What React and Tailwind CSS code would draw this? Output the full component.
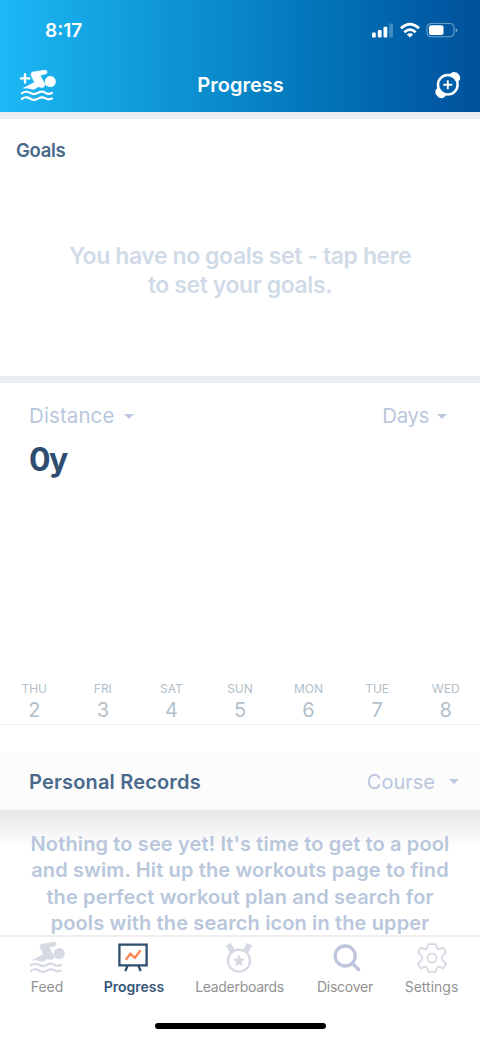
const days = [
  { name: 'THU', date: 2 },
  { name: 'FRI', date: 3 },
  { name: 'SAT', date: 4 },
  { name: 'SUN', date: 5 },
  { name: 'MON', date: 6 },
  { name: 'TUE', date: 7 },
  { name: 'WED', date: 8 },
]

function Swimmer({ plus = false, className }) {
  return (
    <svg viewBox="0 0 37 33" className={['w-[37px] h-[33px]', className].join(' ')} fill="currentColor">
      {plus && <path d="M5 5.2v8.4M.8 9.4h8.6" stroke="currentColor" strokeWidth="2.4" strokeLinecap="round" />}
      <path
        d="M12.4 3.2 25.4 1.2Q26.7 1.3 27 2.8T25.8 4.8L20 6.2 25.2 16C24 18.4 22 19 20 18 17 16.6 16.2 20.2 13 20.2 9.6 20.2 8.5 18.2 3.6 19.1L14.6 13.4 11.2 6.2Q10.6 3.8 12.4 3.2Z"
        stroke="currentColor"
        strokeWidth=".8"
        strokeLinejoin="round"
      />
      <circle cx="30.3" cy="12.6" r="5.5" />
      <g fill="none" stroke="currentColor" strokeWidth="2.2" strokeLinecap="round">
        <path d="M1.9 24.2C6 21.4 8.5 22.8 11 24.3S15 25.6 18.2 23.8 23 22.2 25.4 23.8 29 25.4 32 24" />
        <path d="M1.9 29.8C6 27 8.5 28.6 11 30.1S15 31.4 18.2 29.6 23 28 25.4 29.4 29 30.8 32 29.6" />
      </g>
    </svg>
  )
}

function Watch() {
  return (
    <svg viewBox="0 0 26 28" className="w-[26px] h-[28px]" fill="none" stroke="white">
      <path d="M15.5 3.5 18.5 1.7 21.5 2.3 24 5 24.3 8 22 11zM10 24.5 7 26.5 4 25.7 1.5 22.8 1.2 19.8 3.4 17z" fill="white" strokeWidth="1.6" strokeLinejoin="round" />
      <circle cx="12.8" cy="13.8" r="9.8" fill="#005fa9" strokeWidth="2.5" />
      <path d="M12.8 9.3v9M8.3 13.8h9" strokeWidth="1.9" />
    </svg>
  )
}

function StatusIcons() {
  return (
    <svg viewBox="0 0 86 18" className="w-[86px] h-[18px]" fill="white">
      <rect x="0" y="10.5" width="3.8" height="5" rx="1" />
      <rect x="5.8" y="8" width="3.8" height="7.5" rx="1" />
      <rect x="11.5" y="4.7" width="3.8" height="10.8" rx="1" />
      <rect x="17.2" y="1.5" width="3.8" height="14" rx="1" opacity=".25" />
      <g fill="none" stroke="white" strokeWidth="2.8">
        <path d="M29 6.2Q38 -2 47 6.2" />
        <path d="M32.3 10.2Q38 5 43.7 10.2" />
      </g>
      <path d="M34.8 12.6Q38 9.8 41.2 12.6L38 15.6z" />
      <rect x="55" y="1.4" width="27" height="13.4" rx="4" fill="none" stroke="white" strokeOpacity=".45" />
      <rect x="57" y="3.3" width="14.5" height="9.6" rx="2" />
      <path d="M83.7 6v4.4Q85.2 9.7 85.2 8.2T83.7 6" opacity=".5" />
    </svg>
  )
}

function Board() {
  return (
    <svg viewBox="0 0 30 29" className="mr-[3px] w-[30px] h-[29px]" fill="none">
      <path d="M1.4 1.7h27.2v20.6H1.4zM9.8 22.3 7.3 28M20.2 22.3 22.7 28" stroke="#2f4d6f" strokeWidth="2.3" />
      <path d="M8.4 16 12.4 10.8 16.9 14.8 22 8" stroke="#f98552" strokeWidth="2.3" strokeLinecap="round" />
    </svg>
  )
}

function Medal() {
  return (
    <svg viewBox="0 0 28 32" className="mr-[2px] w-[28px] h-[32px]" fill="#d5dae2">
      <path d="M.8 3.6 5.8 1 10.4 8.6 5.4 11.8zM27.2 3.6 22.2 1 17.6 8.6 22.6 11.8z" />
      <circle cx="14" cy="18.7" r="11" fill="none" stroke="#d5dae2" strokeWidth="2.3" />
      <path d="M14 12.6 15.8 16.5 20 17 16.9 19.9 17.7 24 14 21.9 10.3 24 11.1 19.9 8 17 12.2 16.5z" />
    </svg>
  )
}

function Magnifier() {
  return (
    <svg viewBox="0 0 28 28" className="ml-[4px] w-[28px] h-[28px]" fill="none" stroke="#bfc5dd" strokeLinecap="round">
      <circle cx="12.2" cy="12" r="10" strokeWidth="3.3" />
      <path d="M19.5 19.5 25.5 25.5" strokeWidth="3.6" />
    </svg>
  )
}

function Gear() {
  return (
    <svg viewBox="0 0 30 30" className="w-[30px] h-[30px]" fill="none" stroke="#d5dae2" strokeWidth="1.8" strokeLinejoin="round">
      <path d="M12 1.2h6Q19 1.2 19.2 2.2L19.6 4.3Q20 5.6 21.3 6.1 22.6 6.6 23.7 5.7L25.2 4.7Q26 4.2 26.7 5.2L28.6 8.6Q29 9.6 28.2 10.3L26.6 11.6Q25 12.8 25 15T26.6 18.4L28.2 19.7Q29 20.4 28.6 21.4L26.7 24.8Q26 25.8 25.2 25.3L23.7 24.3Q22.6 23.4 21.3 23.9 20 24.4 19.6 25.7L19.2 27.8Q19 28.8 18 28.8H12Q11 28.8 10.8 27.8L10.4 25.7Q10 24.4 8.7 23.9 7.4 23.4 6.3 24.3L4.8 25.3Q4 25.8 3.3 24.8L1.4 21.4Q1 20.4 1.8 19.7L3.4 18.4Q5 17.2 5 15T3.4 11.6L1.8 10.3Q1 9.6 1.4 8.6L3.3 5.2Q4 4.2 4.8 4.7L6.3 5.7Q7.4 6.6 8.7 6.1 10 5.6 10.4 4.3L10.8 2.2Q11 1.2 12 1.2Z" />
      <circle cx="15" cy="15" r="4.6" />
    </svg>
  )
}

function Caret() {
  return (
    <svg viewBox="0 0 10 5" className="w-[10px] h-[5px]" fill="#bac9de">
      <path d="M0 0h10L5 5z" />
    </svg>
  )
}

const tabs = [
  { label: 'Feed', width: 'w-[90px]', icon: <Swimmer className="ml-px text-[#d5dae2]" /> },
  { label: 'Progress', width: 'w-[84px]', icon: <Board />, active: true },
  { label: 'Leaderboards', width: 'w-[127px]', icon: <Medal />, spacing: 'tracking-[-0.3px]' },
  { label: 'Discover', width: 'w-[84px]', icon: <Magnifier />, spacing: 'tracking-[-0.25px]' },
  { label: 'Settings', width: 'w-[89px]', icon: <Gear /> },
]

export default function App() {
  return (
    <div className="w-[480px] h-[1039px] overflow-hidden flex flex-col bg-white font-[Inter,sans-serif] whitespace-nowrap">
      <header className="h-[112px] shrink-0 bg-linear-to-r from-[#1cb8f5] via-[#0886c8] to-[#00519b] text-white">
        <div className="h-[60px] pt-[2px] pl-[45px] pr-[22px] flex items-center justify-between">
          <span className="text-[19px] font-semibold">8:17</span>
          <StatusIcons />
        </div>
        <div className="h-[50px] pl-5 pr-[19px] grid grid-cols-[1fr_auto_1fr] items-center">
          <Swimmer plus />
          <h1 className="text-[20px] font-semibold">Progress</h1>
          <div className="flex justify-end">
            <Watch />
          </div>
        </div>
      </header>

      {/* Goals */}
      <section className="h-[271px] shrink-0 border-y-[7px] border-[#e9eef2]">
        <h2 className="pt-[17px] pl-4 text-[18.5px] tracking-[-0.3px] leading-7 font-semibold text-[#49698b]">Goals</h2>
        <p className="mt-[78px] text-center text-[23px] tracking-[-0.42px] leading-[29px] font-semibold text-[#d0dbe7]">
          You have no goals set - tap here
          <br />
          to set your goals.
        </p>
      </section>

      {/* Distance chart */}
      <section className="h-[342px] shrink-0 flex flex-col border-b border-[#edeff0]">
        <div className="pt-[18px] pl-[29px] pr-[33px] flex justify-between text-[20.5px] leading-[30px] text-[#b9c7dc]">
          <div className="flex items-center gap-[10px]"><span className="tracking-[0.1px]">Distance</span> <Caret /></div>
          <div className="flex items-center gap-2"><span className="tracking-[-0.4px]">Days</span> <Caret /></div>
        </div>
        <p className="pl-[29px] mt-[9px] text-[32px] tracking-[-1.6px] leading-[40px] font-bold text-[#2f4d6f]">0y</p>
        <div className="mt-auto mb-[2px] flex justify-between">
          {days.map(day => (
            <div key={day.name} className="w-[68.5px] text-center text-[#b2bfca]">
              <p className="text-[12px] leading-[18px]">{day.name}</p>
              <p className="text-[20px] leading-6">{day.date}</p>
            </div>
          ))}
        </div>
      </section>

      {/* Personal records */}
      <section className="mt-7 h-[182px] shrink-0 overflow-hidden">
        <div className="h-[57px] pl-[29px] pr-[21px] flex items-center justify-between bg-[#fcfcfc] text-[20px]">
          <h2 className="text-[20px] tracking-[0.17px] font-semibold text-[#49698b]">Personal Records</h2>
          <div className="flex items-center gap-[14px] text-[#b9c7dc]">Course <Caret /></div>
        </div>
        <div className="h-[125px] pt-[21px] bg-linear-to-b from-[#e7e7e7] to-white to-[38px]">
          <p className="text-center text-[20px] tracking-[0.13px] leading-[26.4px] font-semibold text-[#b9c7dc]">
            Nothing to see yet! It's time to get to a pool
            <br />
            and swim. Hit up the workouts page to find
            <br />
            the perfect workout plan and search for
            <br />
            pools with the search icon in the upper
          </p>
        </div>
      </section>

      <nav className="flex-1 flex flex-col items-center border-t-2 border-[#eeeeee] bg-white">
        <div className="w-full pl-[2px] flex">
          {tabs.map(tab => (
            <div key={tab.label} className={['flex flex-col items-center', tab.width].join(' ')}>
              <div className="h-[41px] flex items-center">{tab.icon}</div>
              <span
                className={[
                  'text-[14px] leading-[18px]',
                  tab.active ? 'font-semibold text-[#365579]' : 'text-[#929292]',
                  tab.spacing,
                ].join(' ')}
              >
                {tab.label}
              </span>
            </div>
          ))}
        </div>
        <div className="mt-[27px] w-[171px] h-[6px] rounded-full bg-black" />
      </nav>
    </div>
  )
}
